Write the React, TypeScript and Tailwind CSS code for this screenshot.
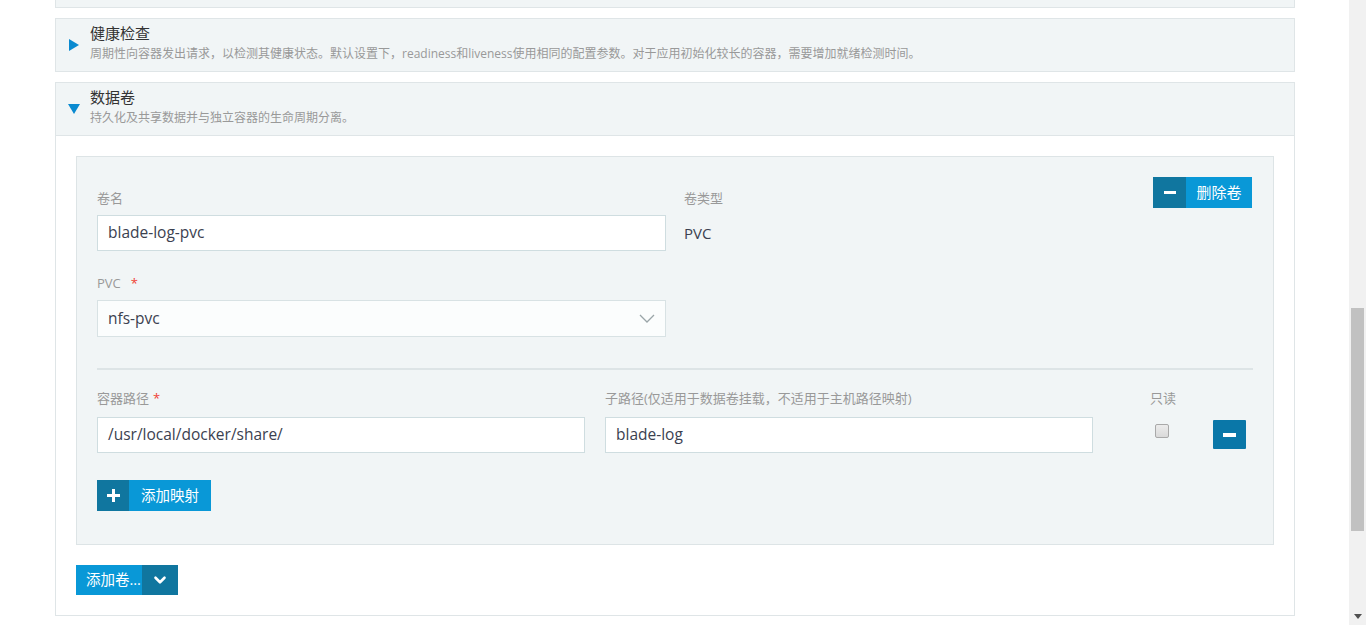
import { ChevronDown } from "lucide-react";

const FONT = { fontFamily: '"Open Sans", "Noto Sans CJK SC", sans-serif' };

function Caret({ open }: { open: boolean }) {
  return open ? (
    <svg width="12" height="10" viewBox="0 0 12 10" className="shrink-0">
      <path d="M0 0 L12 0 L6 10 Z" fill="#0a8ad0" />
    </svg>
  ) : (
    <svg width="10" height="12" viewBox="0 0 10 12" className="shrink-0">
      <path d="M0 0 L10 6 L0 12 Z" fill="#0a8ad0" />
    </svg>
  );
}

function PanelHeader({ title, desc, open }: { title: string; desc: string; open: boolean }) {
  return (
    <div className="flex h-[52px] items-start bg-[#f1f5f6] pt-[4px]">
      <div className={open ? "flex w-[34px] justify-center pl-[2px] pt-[17px]" : "flex w-[34px] justify-center pl-[2px] pt-[16px]"}>
        <Caret open={open} />
      </div>
      <div className="flex flex-col">
        <div className="text-[15px] leading-[20px] text-[#333]">{title}</div>
        <div className="mt-[3px] text-[12px] leading-[16px] text-[#999]">{desc}</div>
      </div>
    </div>
  );
}

function Label({ text, required, gap = "ml-1" }: { text: string; required?: boolean; gap?: string }) {
  return (
    <div className="flex h-[18px] items-center text-[13px] text-[#999]">
      {text}
      {required && <span className={`${gap} text-[#f04134]`}>*</span>}
    </div>
  );
}

function Input({ value, className = "" }: { value: string; className?: string }) {
  return (
    <div
      className={`flex h-[36px] items-center border border-[#cfdde0] bg-white px-[10px] text-[15.5px] text-[#3b4150] ${className}`}
    >
      {value}
    </div>
  );
}

export default function App() {
  return (
    <div className="flex h-[625px] w-[1366px] overflow-hidden bg-white" style={FONT}>
      <div className="flex flex-1 flex-col pl-[55px] pr-[54px]">
        <div className="h-[8px] border-x border-b border-[#dfe5e7] bg-[#f1f5f6]" />

        <div className="mt-[10px] border border-[#dfe5e7]">
          <PanelHeader
            open={false}
            title="健康检查"
            desc="周期性向容器发出请求，以检测其健康状态。默认设置下，readiness和liveness使用相同的配置参数。对于应用初始化较长的容器，需要增加就绪检测时间。"
          />
        </div>

        <div className="mt-[10px] border border-[#dfe5e7]">
          <PanelHeader open title="数据卷" desc="持久化及共享数据并与独立容器的生命周期分离。" />
          <div className="border-t border-[#dfe5e7] bg-white px-[20px] pt-[20px] pb-[20px]">
            <div className="border border-[#dde4e6] bg-[#f1f5f6] px-[20px] pt-[20px] pb-[33px]">
              <div className="flex">
                <div className="flex w-[569px] flex-col pt-[13px]">
                  <Label text="卷名" />
                  <Input value="blade-log-pvc" className="mt-[7px]" />
                  <div className="mt-[24px]">
                    <Label text="PVC" required gap="ml-[10px]" />
                  </div>
                  <div className="mt-[7px] flex h-[37px] items-center justify-between border border-[#d8e2e4] bg-[#fbfdfd] pl-[10px] pr-[10px] text-[15.5px] text-[#3b4150]">
                    nfs-pvc
                    <svg width="16" height="9" viewBox="0 0 16 9">
                      <path d="M1 1 L8 8 L15 1" fill="none" stroke="#9aa5a8" strokeWidth="1.3" />
                    </svg>
                  </div>
                </div>
                <div className="ml-[18px] flex flex-1 flex-col pt-[13px]">
                  <Label text="卷类型" />
                  <div className="mt-[7px] flex h-[36px] items-center text-[15px] text-[#3b4150]">PVC</div>
                </div>
                <div className="flex h-[31px] self-start pr-[1px]">
                  <div className="flex w-[33px] items-center justify-center bg-[#10769f]">
                    <div className="h-[3px] w-[12px] bg-white" />
                  </div>
                  <div className="flex w-[66px] items-center justify-center bg-[#0998d7] text-[15px] text-white">
                    删除卷
                  </div>
                </div>
              </div>

              <div className="mt-[31px] h-[2px] bg-[#dde4e6]" />

              <div className="mt-[20px] flex">
                <div className="flex w-[488px] flex-col">
                  <Label text="容器路径" required />
                  <Input value="/usr/local/docker/share/" className="mt-[9px]" />
                </div>
                <div className="ml-[20px] flex w-[488px] flex-col">
                  <Label text="子路径(仅适用于数据卷挂载，不适用于主机路径映射)" />
                  <Input value="blade-log" className="mt-[9px]" />
                </div>
                <div className="ml-[57px] flex w-[63px] flex-col">
                  <Label text="只读" />
                  <div className="ml-[5px] mt-[16px] h-[14px] w-[14px] rounded-[2px] border border-[#a9a9a9] bg-gradient-to-b from-[#ececec] to-[#dadada]" />
                </div>
                <div className="mt-[30px] flex h-[29px] w-[33px] items-center justify-center rounded-[1px] bg-[#0a77a8]">
                  <div className="h-[4px] w-[13px] bg-white" />
                </div>
              </div>

              <div className="mt-[27px] flex h-[31px] w-[114px]">
                <div className="flex w-[32px] items-center justify-center bg-[#10769f]">
                  <svg width="13" height="13" viewBox="0 0 13 13">
                    <path d="M5 0 H8 V5 H13 V8 H8 V13 H5 V8 H0 V5 H5 Z" fill="white" />
                  </svg>
                </div>
                <div className="flex flex-1 items-center justify-center bg-[#0998d7] text-[14.5px] text-white">
                  添加映射
                </div>
              </div>
            </div>

            <div className="mt-[20px] flex h-[30px] w-[102px]">
              <div className="flex w-[66px] items-center pl-[10px] text-[14.5px] text-white bg-[#0998d7]">
                添加卷...
              </div>
              <div className="flex flex-1 items-center justify-center bg-[#10769f]">
                <ChevronDown size={18} strokeWidth={3.5} color="white" />
              </div>
            </div>
          </div>
        </div>
      </div>

      <div className="flex w-[17px] flex-col bg-[#f1f1f1]">
        <div className="h-[308px]" />
        <div className="mx-[2px] h-[223px] bg-[#c1c1c1]" />
        <div className="flex-1" />
        <div className="flex h-[17px] items-center justify-center">
          <svg width="8" height="5" viewBox="0 0 8 5">
            <path d="M0 0 H8 L4 5 Z" fill="#505050" />
          </svg>
        </div>
      </div>
    </div>
  );
}
